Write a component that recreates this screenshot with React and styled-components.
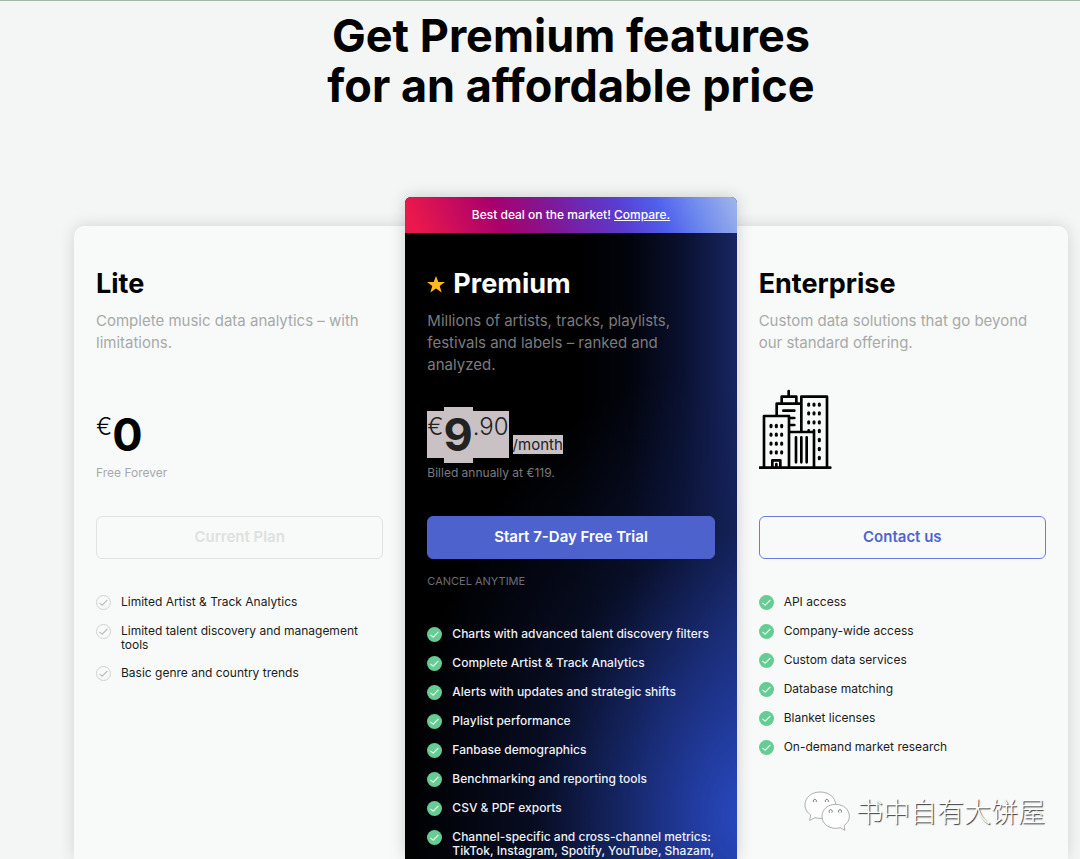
import React from "react";
import styled, { createGlobalStyle } from "styled-components";

const GlobalStyle = createGlobalStyle`
    * {
        box-sizing: border-box;
    }
    body {
        margin: 0;
        background: #f4f6f5;
        font-family: Inter, "Liberation Sans", sans-serif;
        color: #000;
    }
`

//styled components
const Page = styled.main`
    position: relative;
    display: flex;
    flex-direction: column;
    min-height: 100vh;
    padding: 10px 12px 0 74px;
    border-top: 1px solid #a3b8a5;
`
const Title = styled.h1`
    margin: 0 0 115px 0;
    font-size: 45px;
    line-height: 50px;
    font-weight: 700;
    text-align: center;
`
const Plans = styled.div`
    flex: 1;
    display: grid;
    grid-template-columns: repeat(3, 1fr);
    background: #f8faf9;
    border-radius: 10px 10px 0 0;
    box-shadow: 0 0 16px rgba(0, 0, 0, 0.14);
`
const PlanCard = styled.section`
    display: flex;
    flex-direction: column;
    padding: 42px 22px 0;
`
const FeaturedCard = styled.section`
    display: flex;
    flex-direction: column;
    margin-top: -29px;
    border-radius: 6px 6px 0 0;
    overflow: hidden;
    color: #fff;
    background:
        radial-gradient(ellipse 105% 70% at 104% 94%, #2849c0 0%, rgba(34, 60, 160, 0.75) 28%, rgba(16, 28, 75, 0.45) 62%, transparent 100%),
        linear-gradient(to right, #000 52%, #02040c 68%, #0a1130 84%, #172663 100%);
    box-shadow: 0 0 16px rgba(0, 0, 0, 0.18);
`
const FeaturedBody = styled.div`
    padding: 35px 22px 0;
`
const Banner = styled.p`
    margin: 0;
    font-size: 12px;
    line-height: 36px;
    font-weight: 500;
    text-align: center;
    background: linear-gradient(66deg, #ea184c 4%, #a8006c 29%, #7d1a9c 46%, #5a3cd0 64%, #4f5fec 76%, #6d88ee 86%, #a0b6ea 100%);
`
const BannerLink = styled.a`
    color: inherit;
    text-decoration: underline;
`
const PlanName = styled.h2`
    display: flex;
    align-items: center;
    gap: 7px;
    margin: 0 0 10px 0;
    font-size: 27px;
    line-height: 32px;
    font-weight: 700;
`
const Description = styled.p`
    min-height: 66px;
    margin: 0;
    font-size: 15px;
    line-height: 22px;
    color: ${props => props.$dark ? "#7b7b7d" : "#a7a9a8"};
`
const PriceArea = styled.div`
    height: 140px;
    padding-top: ${props => props.$picture ? "13px" : "31px"};
`
const Price = styled.div`
    display: flex;
    align-items: flex-start;
    height: 56px;
    color: ${props => props.$selected ? "#222" : "#000"};

    span {
        background: ${props => props.$selected ? "#c9c1c4" : "transparent"};
    }
`
const Amount = styled.span`
    font-size: 45px;
    line-height: 56px;
    font-weight: 700;
`
const SmallAmount = styled.span`
    height: 47px;
    margin-top: 4px;
    font-size: 24px;
    line-height: 32px;
    font-weight: 300;
`
const Period = styled.span`
    align-self: flex-end;
    margin: 0 0 9px 4px;
    font-size: 15px;
    line-height: 19px;
`
const Billing = styled.p`
    margin: 0;
    font-size: 12px;
    line-height: 20px;
    color: ${props => props.$dark ? "#7b7b7d" : "#a7a9a8"};
`
const buttonLooks = {
    muted: { text: "#dde1e0", border: "#dfe2e1", fill: "transparent" },
    solid: { text: "#fff", border: "#4e62cd", fill: "#4e62cd" },
    outline: { text: "#5063d2", border: "#6a7ce0", fill: "transparent" }
}
const PlanButton = styled.button`
    width: 100%;
    height: 43px;
    flex-shrink: 0;
    padding: 0 0 2px;
    font-family: inherit;
    font-size: 15px;
    font-weight: 600;
    color: ${props => buttonLooks[props.$look].text};
    background: ${props => buttonLooks[props.$look].fill};
    border: 1px solid ${props => buttonLooks[props.$look].border};
    border-radius: 6px;
`
const CancelNote = styled.p`
    margin: 12px 0 0 0;
    font-size: 11px;
    line-height: 20px;
    color: #6c6d78;
    text-transform: uppercase;
`
const FeatureList = styled.ul`
    display: flex;
    flex-direction: column;
    gap: 14px;
    margin: 36px 0 0 0;
    padding: 0;
    list-style: none;
    font-size: 12px;
    line-height: 14px;
    font-weight: ${props => props.$dark ? 500 : 400};
    color: ${props => props.$dark ? "#eef0f6" : "#1c1c20"};
`
const Feature = styled.li`
    display: flex;
    align-items: flex-start;
    gap: 10px;

    svg {
        flex-shrink: 0;
    }
`
const Watermark = styled.div`
    position: absolute;
    right: 35px;
    bottom: 28px;
    display: flex;
    align-items: center;
    gap: 6px;
    font-family: "Noto Sans CJK SC", sans-serif;
    font-size: 27px;
    line-height: 40px;
    font-weight: 300;
    color: #fff;
    text-shadow: 1px 1px 1px #333;
`

const CheckIcon = ({ muted }) => (
    <svg width="15" height="15" viewBox="0 0 15 15" fill="none" aria-hidden="true">
        {muted
            ? <circle cx="7.5" cy="7.5" r="7" stroke="#cfd2d1" />
            : <circle cx="7.5" cy="7.5" r="7.5" fill="#66cc94" />}
        <path d="M3.4 7.9 6.2 10.2 11.4 4.8" stroke={muted ? "#b9bcbb" : "#e4f8ec"} strokeWidth="1.2" />
    </svg>
)

const StarIcon = () => (
    <svg width="19" height="18" viewBox="0 0 19 18" aria-hidden="true">
        <path d="M9 1 11.3 7H18L12.7 11 14.7 17.5 9 13.6 3.3 17.5 5.3 11 0 7H6.7Z" fill="#ffb81f" />
    </svg>
)

const windowRows = (xs, ys) => ys.map(y => xs.map(x => (
    <path key={`${x}-${y}`} d={`M${x} ${y - 2}v4`} strokeWidth="9" />
)))

const BuildingsIcon = () => (
    <svg width="74" height="81" viewBox="26 27 222 243" fill="none" stroke="#000" strokeWidth="8" strokeLinecap="round" strokeLinejoin="round" aria-hidden="true">
        <path d="M28 263H240M41 263V108H116V263M79 108V71H153V155M94 71V50H138V71M115 50V33M153 71V50H230V263M116 156H191V263M191 156V151" />
        <path d="M66 263V241H90V263M78 252V263M99 92H132M120 114H132M120 135H132" />
        <path d="M137 172V247M153 172V247M169 172V247" />
        {windowRows([62, 78, 94], [138, 164, 191, 217])}
        {windowRows([175, 191, 207], [74, 100, 127])}
        {windowRows([207], [153, 180, 207, 234])}
        <path d="M175 151V153" />
    </svg>
)

const ChatIcon = () => (
    <svg width="46" height="40" viewBox="0 0 138 120" aria-hidden="true">
        <g fill="#fff" stroke="#9a9d9c" strokeWidth="2.5" strokeLinejoin="round">
            <path d="M48 3C22 3 3 20 3 42c0 13 7 23 17 30l-3 16 16-8c5 1 10 2 15 2 26 0 47-17 47-40S74 3 48 3Z" />
            <path d="M95 40c-23 0-41 15-41 36s18 36 41 36c5 0 9-1 14-2l14 8-3-14c10-7 16-16 16-28 0-21-18-36-41-36Z" />
        </g>
        <g fill="none" stroke="#777a79" strokeWidth="3" strokeLinecap="round">
            <path d="M28 32a5 5 0 1 1 9 0M64 32a5 5 0 1 1 9 0M76 64a5 5 0 1 1 8 0M104 64a5 5 0 1 1 8 0" />
        </g>
    </svg>
)

const liteFeatures = [
    "Limited Artist & Track Analytics",
    "Limited talent discovery and management tools",
    "Basic genre and country trends"
]

const premiumFeatures = [
    "Charts with advanced talent discovery filters",
    "Complete Artist & Track Analytics",
    "Alerts with updates and strategic shifts",
    "Playlist performance",
    "Fanbase demographics",
    "Benchmarking and reporting tools",
    "CSV & PDF exports",
    "Channel-specific and cross-channel metrics: TikTok, Instagram, Spotify, YouTube, Shazam,"
]

const enterpriseFeatures = [
    "API access",
    "Company-wide access",
    "Custom data services",
    "Database matching",
    "Blanket licenses",
    "On-demand market research"
]

const Features = ({ list, muted, dark }) => (
    <FeatureList $dark={dark}>
        {list.map(feature => (
            <Feature key={feature}>
                <CheckIcon muted={muted} />
                <span>{feature}</span>
            </Feature>
        ))}
    </FeatureList>
)

export default function App() {

return (
    <React.Fragment>
        <GlobalStyle />
        <Page>
            <Title>
                Get Premium features<br />for an affordable price
            </Title>

            <Plans>
                <PlanCard>
                    <PlanName>Lite</PlanName>
                    <Description>Complete music data analytics – with limitations.</Description>
                    <PriceArea>
                        <Price>
                            <SmallAmount>€</SmallAmount>
                            <Amount>0</Amount>
                        </Price>
                        <Billing>Free Forever</Billing>
                    </PriceArea>
                    <PlanButton type="button" $look="muted" disabled>Current Plan</PlanButton>
                    <Features list={liteFeatures} muted />
                </PlanCard>

                <FeaturedCard>
                    <Banner>
                        Best deal on the market! <BannerLink href="#compare">Compare.</BannerLink>
                    </Banner>
                    <FeaturedBody>
                        <PlanName><StarIcon />Premium</PlanName>
                        <Description $dark>
                            Millions of artists, tracks, playlists, festivals and labels – ranked and analyzed.
                        </Description>
                        <PriceArea>
                            <Price $selected>
                                <SmallAmount>€</SmallAmount>
                                <Amount>9</Amount>
                                <SmallAmount>.90</SmallAmount>
                                <Period>/month</Period>
                            </Price>
                            <Billing $dark>Billed annually at €119.</Billing>
                        </PriceArea>
                        <PlanButton type="button" $look="solid">Start 7-Day Free Trial</PlanButton>
                        <CancelNote>Cancel anytime</CancelNote>
                        <Features list={premiumFeatures} dark />
                    </FeaturedBody>
                </FeaturedCard>

                <PlanCard>
                    <PlanName>Enterprise</PlanName>
                    <Description>Custom data solutions that go beyond our standard offering.</Description>
                    <PriceArea $picture>
                        <BuildingsIcon />
                    </PriceArea>
                    <PlanButton type="button" $look="outline">Contact us</PlanButton>
                    <Features list={enterpriseFeatures} />
                </PlanCard>
            </Plans>

            <Watermark>
                <ChatIcon />
                <span>书中自有大饼屋</span>
            </Watermark>
        </Page>
    </React.Fragment>
    )
};
